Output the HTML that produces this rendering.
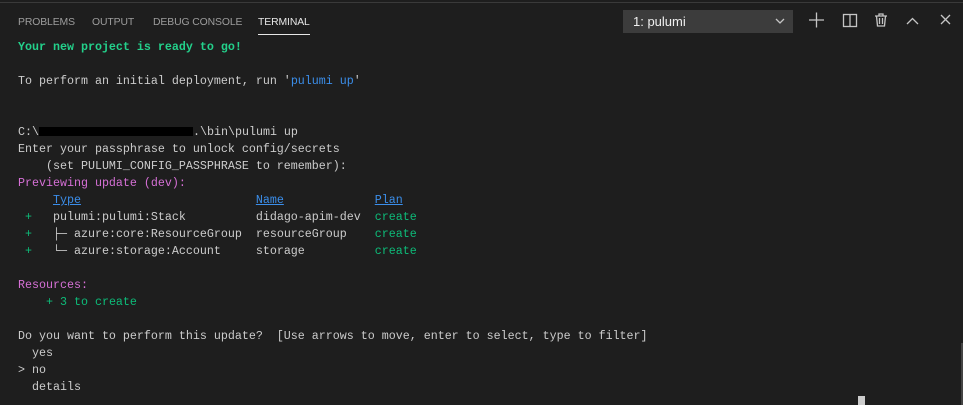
<!DOCTYPE html>
<html><head><style>
html,body{margin:0;padding:0;background:#1e1e1e;width:963px;height:405px;overflow:hidden;position:relative}
.top{position:absolute;left:0;top:0;width:963px;height:3px;border-top:1px solid #1e1e1e;border-bottom:1px solid #3a3a3a;box-sizing:border-box}
.tab{position:absolute;top:17px;font:10.4px "Liberation Sans",sans-serif;color:#9d9d9d;letter-spacing:-0.1px}
.tab.on{color:#e7e7e7}
.ul{position:absolute;left:258px;top:34px;width:52px;height:1px;background:#e7e7e7}
.dd{position:absolute;left:623px;top:10px;width:170px;height:23px;background:#3c3c3c;font:13px "Liberation Sans",sans-serif;color:#f0f0f0;line-height:23px;padding-left:10px;box-sizing:border-box}
pre{position:absolute;left:18px;top:39px;margin:0;font:11.67px/17px "Liberation Mono",monospace;color:#cccccc;white-space:pre}
.g{color:#23d18b;font-weight:bold}.b{color:#3b8eea}.m{color:#d670d6}.c{color:#0dbc79}.u{color:#3b8eea;text-decoration:underline}
.red{display:inline-block;width:154px;height:9px;background:#000;vertical-align:-1px}
.cur{position:absolute;left:858px;top:396px;width:7px;height:9px;background:#cccccc}
.sb{position:absolute;left:961px;top:343px;width:2px;height:62px;background:#444}
svg{position:absolute;top:0;left:0}
</style></head><body>
<div class="top"></div>
<div class="tab" style="left:18px">PROBLEMS</div>
<div class="tab" style="left:92px">OUTPUT</div>
<div class="tab" style="left:153px">DEBUG CONSOLE</div>
<div class="tab on" style="left:258px">TERMINAL</div>
<div class="ul"></div>
<div class="dd">1: pulumi</div>
<svg width="963" height="40" fill="none" stroke="#c5c5c5" stroke-width="1.3">
<path d="M776 19l4 4 4-4"/>
<path d="M809 20h15M816.5 12.5v15"/>
<rect x="843.5" y="14.5" width="13" height="12"/><path d="M850 14.5v12"/>
<path d="M875 16h12M879 16v-2h4v2M876.5 16l1 10h7l1-10M879.5 18v6M882.5 18v6"/>
<path d="M907 24l5.5-5.5 5.5 5.5"/>
<path d="M941 15l9 9M950 15l-9 9"/>
</svg>
<pre><span class="g">Your new project is ready to go!</span>

To perform an initial deployment, run '<span class="b">pulumi up</span>'


C:\<span class="red"></span>.\bin\pulumi up
Enter your passphrase to unlock config/secrets
    (set PULUMI_CONFIG_PASSPHRASE to remember):
<span class="m">Previewing update (dev):</span>
     <span class="u">Type</span>                         <span class="u">Name</span>             <span class="u">Plan</span>
 <span class="c">+</span>   pulumi:pulumi:Stack          didago-apim-dev  <span class="c">create</span>
 <span class="c">+</span>   ├─ azure:core:ResourceGroup  resourceGroup    <span class="c">create</span>
 <span class="c">+</span>   └─ azure:storage:Account     storage          <span class="c">create</span>

<span class="m">Resources:</span>
    <span class="c">+ 3 to create</span>

Do you want to perform this update?  [Use arrows to move, enter to select, type to filter]
  yes
&gt; no
  details</pre>
<div class="cur"></div>
<div class="sb"></div>
</body></html>
